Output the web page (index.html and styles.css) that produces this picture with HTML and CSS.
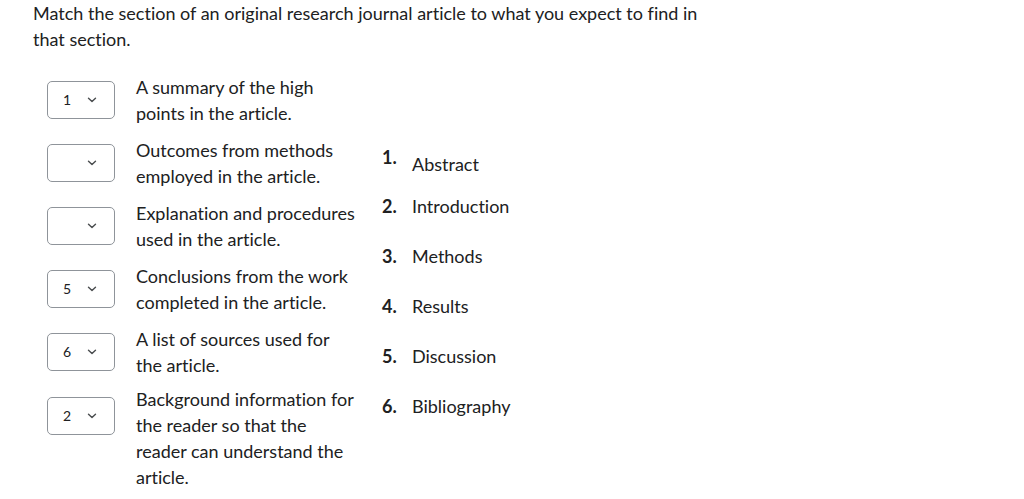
FILE: index.html
```html
<!DOCTYPE html>
<html lang="en">
<head>
<meta charset="utf-8">
<title>Matching question</title>
<link rel="stylesheet" href="styles.css">
</head>
<body>
<div class="question">
  <p class="prompt">Match the section of an original research journal article to what you expect to find in that section.</p>
  <div class="matching">
    <div class="pairs">
      <div class="pair">
        <div class="select"><span class="value">1</span><svg class="chev" viewBox="0 0 10 6"><path d="M1.5 1.2 L5 4.6 L8.5 1.2"/></svg></div>
        <div class="desc">A summary of the high points in the article.</div>
      </div>
      <div class="pair">
        <div class="select"><span class="value"></span><svg class="chev" viewBox="0 0 10 6"><path d="M1.5 1.2 L5 4.6 L8.5 1.2"/></svg></div>
        <div class="desc">Outcomes from methods employed in the article.</div>
      </div>
      <div class="pair">
        <div class="select"><span class="value"></span><svg class="chev" viewBox="0 0 10 6"><path d="M1.5 1.2 L5 4.6 L8.5 1.2"/></svg></div>
        <div class="desc">Explanation and procedures used in the article.</div>
      </div>
      <div class="pair">
        <div class="select"><span class="value">5</span><svg class="chev" viewBox="0 0 10 6"><path d="M1.5 1.2 L5 4.6 L8.5 1.2"/></svg></div>
        <div class="desc">Conclusions from the work completed in the article.</div>
      </div>
      <div class="pair">
        <div class="select"><span class="value">6</span><svg class="chev" viewBox="0 0 10 6"><path d="M1.5 1.2 L5 4.6 L8.5 1.2"/></svg></div>
        <div class="desc">A list of sources used for the article.</div>
      </div>
      <div class="pair pair-last">
        <div class="select"><span class="value">2</span><svg class="chev" viewBox="0 0 10 6"><path d="M1.5 1.2 L5 4.6 L8.5 1.2"/></svg></div>
        <div class="desc">Background information for the reader so that the reader can understand the article.</div>
      </div>
    </div>
    <ol class="choices">
      <li class="choice choice-first"><span class="num">1.</span><span class="label">Abstract</span></li>
      <li class="choice"><span class="num">2.</span><span class="label">Introduction</span></li>
      <li class="choice"><span class="num">3.</span><span class="label">Methods</span></li>
      <li class="choice"><span class="num">4.</span><span class="label">Results</span></li>
      <li class="choice"><span class="num">5.</span><span class="label">Discussion</span></li>
      <li class="choice"><span class="num">6.</span><span class="label">Bibliography</span></li>
    </ol>
  </div>
</div>
</body>
</html>
```
FILE: styles.css
```css
html, body {
  margin: 0;
  padding: 0;
  background: #ffffff;
}

body {
  font-family: Lato, "Open Sans", sans-serif;
  color: #202122;
  font-size: 18px;
  line-height: 26px;
  font-variant-ligatures: none;
}

.question {
  padding: 0 0 0 33px;
}

.prompt {
  margin: 0;
  width: 680px;
}

.matching {
  display: flex;
  align-items: flex-start;
  margin-top: 22px;
}

.pairs {
  display: flex;
  flex-direction: column;
  gap: 11px;
  padding-left: 14px;
}

.pair {
  display: flex;
  align-items: flex-start;
  gap: 21px;
}

.pair-last {
  margin-top: -3px;
}

.select {
  box-sizing: border-box;
  width: 68px;
  height: 38px;
  margin-top: 7px;
  border: 1px solid #8f949a;
  border-radius: 5px;
  display: flex;
  align-items: center;
  padding-left: 15px;
  font-size: 14px;
  color: #202122;
}

.pair-last .select {
  margin-top: 11px;
}

.select .value {
  width: 23px;
}

.chev {
  width: 10px;
  height: 6px;
  margin-left: 1px;
  fill: none;
  stroke: #494c4e;
  stroke-width: 1.4;
  stroke-linecap: round;
  stroke-linejoin: round;
}

.desc {
  width: 221px;
}

.choices {
  list-style: none;
  margin: 77px 0 0 25px;
  padding: 0;
  display: flex;
  flex-direction: column;
  gap: 24px;
}

.choice {
  display: flex;
}

.num {
  width: 30px;
  font-weight: 700;
}

.choice-first {
  margin-bottom: -8px;
}

.choice-first .num {
  position: relative;
  top: -7px;
}
```
